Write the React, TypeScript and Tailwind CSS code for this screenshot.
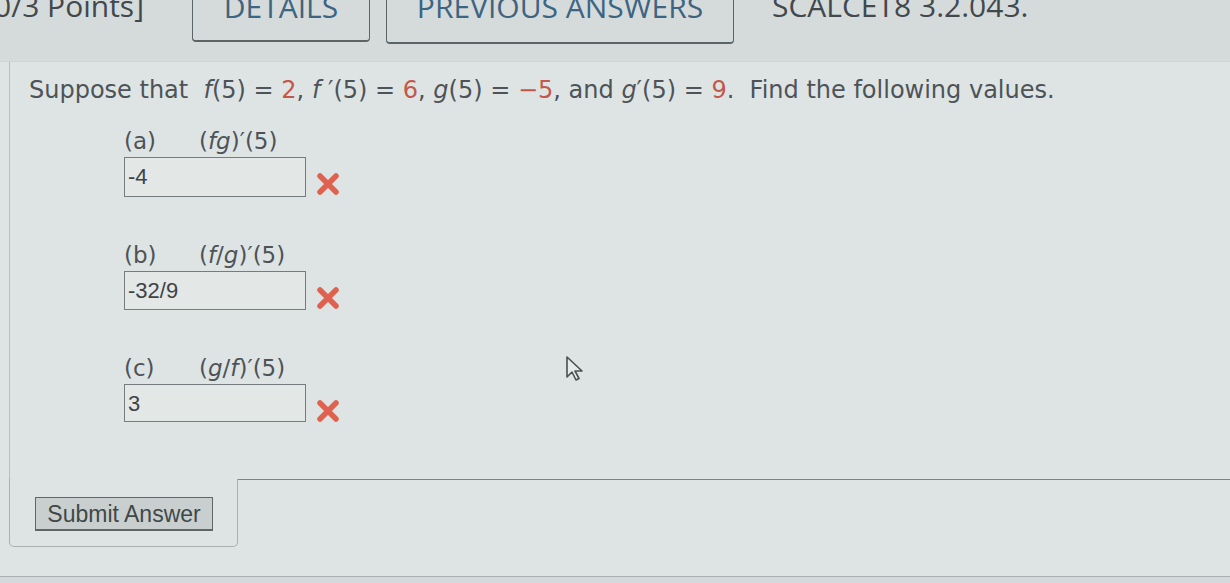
import React from "react";

const XMark = () => (
  <svg width="24" height="24" viewBox="0 0 24 24" className="ml-[10px] mt-[15px]">
    <path d="M4 4 L20 20 M20 4 L4 20" stroke="#de624f" strokeWidth="5.5" strokeLinecap="round" />
  </svg>
);

const Part = ({ label, expr, value, mt, h }: { label: string; expr: React.ReactNode; value: string; mt: string; h: string }) => (
  <div className={`flex flex-col ${mt}`}>
    <div className="flex text-[23px] leading-[28px] text-[#4d5358]" style={{ fontFamily: "'DejaVu Sans', sans-serif" }}>
      <span className="w-[75px]">{label}</span>
      <span>{expr}</span>
    </div>
    <div className="flex mt-[2px]">
      <div
        className={`w-[182px] ${h} border border-[#767b7e] bg-[#e3e7e6] pl-[3px] pt-[6px] text-[22px] leading-[26px] text-[#3e4346]`}
        style={{ fontFamily: "'Liberation Sans', Arial, sans-serif" }}
      >
        {value}
      </div>
      <XMark />
    </div>
  </div>
);

const I = ({ children }: { children: React.ReactNode }) => <i className="italic">{children}</i>;
const R = ({ children }: { children: React.ReactNode }) => <span className="text-[#c2574b]">{children}</span>;

export default function App() {
  return (
    <div className="relative w-[1230px] h-[583px] overflow-hidden bg-[#dee4e3]">
      {/* header */}
      <div className="h-[62px] bg-[#d5dadb] border-b border-[#cdd3d4] flex items-start text-[30px]" style={{ fontFamily: "'Open Sans', sans-serif" }}>
        <div className="w-[198px] -ml-[6px] -mt-[12px] text-[#42484c] leading-[36px] whitespace-nowrap">0/3 Points]</div>
        <div className="w-[178px] h-[52px] -mt-[10px] border-[1.5px] border-b-[2.5px] border-[#5b6568] rounded-[4px] flex justify-center text-[#3d6480] leading-[36px]">
          <span className="-mt-[2px]">DETAILS</span>
        </div>
        <div className="ml-[16px] w-[348px] h-[54px] -mt-[10px] border-[1.5px] border-b-[2.5px] border-[#5b6568] rounded-[4px] flex justify-center text-[#3d6480] leading-[36px]">
          <span className="-mt-[2px]">PREVIOUS ANSWERS</span>
        </div>
        <div className="ml-[38px] -mt-[12px] text-[#42484c] leading-[36px] whitespace-nowrap">SCALCET8 3.2.043.</div>
      </div>

      {/* content */}
      <div className="flex flex-col">
        <div className="ml-[9px] border-l border-[#b9bfc0] pl-[19px] pt-[13px] pb-[56px]">
          <div className="text-[24px] leading-[30px] text-[#4d5358] whitespace-nowrap" style={{ fontFamily: "'DejaVu Sans', sans-serif" }}>
            Suppose that&nbsp; <I>f</I>(5) = <R>2</R>, <I>f</I> ′(5) = <R>6</R>, <I>g</I>(5) = <R>−5</R>, and <I>g</I>′(5) = <R>9</R>.&nbsp; Find the following values.
          </div>
          <div className="ml-[95px] flex flex-col">
            <Part mt="mt-[22px]" h="h-[40px]" label="(a)" expr={<>(<I>fg</I>)′(5)</>} value="-4" />
            <Part mt="mt-[44px]" h="h-[39px]" label="(b)" expr={<>(<I>f</I>/<I>g</I>)′(5)</>} value="-32/9" />
            <Part mt="mt-[44px]" h="h-[38px]" label="(c)" expr={<>(<I>g</I>/<I>f</I>)′(5)</>} value="3" />
          </div>
        </div>
        <div className="flex">
          <div className="ml-[9px] w-[229px] h-[68px] border-l border-b border-r border-[#a9b0b2] rounded-b-[5px] flex flex-col">
            <div className="h-[18px]" />
            <button
              className="ml-[25px] w-[178px] h-[34px] bg-[#c9cfce] border border-[#5f6668] border-b-2 text-[23px] text-[#40484a] leading-[30px] text-center"
              style={{ fontFamily: "'Liberation Sans', Arial, sans-serif" }}
            >
              Submit Answer
            </button>
          </div>
          <div className="flex-1 border-t border-[#7d8486] h-[68px]" />
        </div>
        <div className="mt-[29px] border-t border-[#a9b0b2] h-[12px] bg-[#d4dadb]" />
      </div>

      {/* cursor */}
      <svg className="absolute left-[565px] top-[355px]" width="20" height="28" viewBox="0 0 20 28">
        <path d="M2 2 L2 22 L7 17 L11 25 L14 23.5 L10 16 L17 16 Z" fill="#e6ebea" stroke="#4a4f52" strokeWidth="1.6" strokeLinejoin="round" />
      </svg>
    </div>
  );
}
